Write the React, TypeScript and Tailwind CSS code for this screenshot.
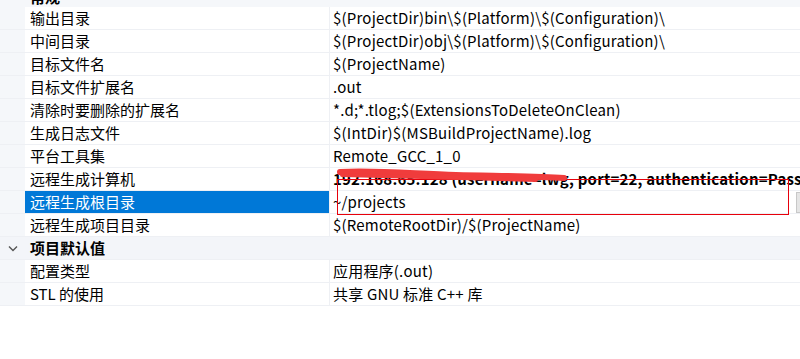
import React from 'react'

type Row = { label: string; value: string; bold?: boolean; selected?: boolean }

const general: Row[] = [
  { label: '输出目录', value: '$(ProjectDir)bin\\$(Platform)\\$(Configuration)\\' },
  { label: '中间目录', value: '$(ProjectDir)obj\\$(Platform)\\$(Configuration)\\' },
  { label: '目标文件名', value: '$(ProjectName)' },
  { label: '目标文件扩展名', value: '.out' },
  { label: '清除时要删除的扩展名', value: '*.d;*.tlog;$(ExtensionsToDeleteOnClean)' },
  { label: '生成日志文件', value: '$(IntDir)$(MSBuildProjectName).log' },
  { label: '平台工具集', value: 'Remote_GCC_1_0' },
  {
    label: '远程生成计算机',
    value: '192.168.65.128 (username=lwg, port=22, authentication=Password)',
    bold: true,
  },
  { label: '远程生成根目录', value: '~/projects', selected: true },
  { label: '远程生成项目目录', value: '$(RemoteRootDir)/$(ProjectName)' },
]

const defaults: Row[] = [
  { label: '配置类型', value: '应用程序(.out)' },
  { label: 'STL 的使用', value: '共享 GNU 标准 C++ 库' },
]

function PropRow({ row }: { row: Row }) {
  return (
    <div className="flex h-[23px] border-b border-[#eef0f4] bg-[#f5f7fa]">
      <div className="w-[25px] shrink-0" />
      <div
        className={
          row.selected
            ? 'flex w-[304px] shrink-0 items-center bg-[#0078d7] pl-[5px] text-white'
            : 'flex w-[304px] shrink-0 items-center bg-white pl-[5px] text-black'
        }
      >
        {row.label}
      </div>
      <div className="flex min-w-0 flex-1 items-center overflow-hidden whitespace-nowrap border-l border-[#eef0f4] bg-white pl-[3px] tracking-[0.2px]">
        <span className={row.bold ? 'font-bold' : ''}>{row.value}</span>
        {row.selected && (
          <div className="ml-auto h-[21px] w-[4px] shrink-0 self-end border border-r-0 border-[#c8c8c8] bg-[#e5e5e5]" />
        )}
      </div>
    </div>
  )
}

export default function App() {
  return (
    <div
      className="relative h-[359px] w-[800px] overflow-hidden bg-white text-[15px] text-black"
      style={{ fontFamily: '"Noto Sans CJK SC", "Noto Sans", sans-serif' }}
    >
      <div className="flex h-[7px] items-end overflow-hidden bg-[#f5f7fa]">
        <div className="-mb-[1px] h-[23px] pl-[30px] font-bold leading-[23px]">常规</div>
      </div>

      {general.map((r) => (
        <PropRow key={r.label} row={r} />
      ))}

      <div className="flex h-[23px] items-center border-b border-[#eef0f4] bg-[#f3f5f9]">
        <div className="flex w-[25px] shrink-0 items-center justify-center">
          <svg width="10" height="7" viewBox="0 0 10 7" fill="none">
            <path d="M1 1.5 L5 5.5 L9 1.5" stroke="#555" strokeWidth="1.4" />
          </svg>
        </div>
        <div className="pl-[5px] font-bold">项目默认值</div>
      </div>

      {defaults.map((r) => (
        <PropRow key={r.label} row={r} />
      ))}

      {/* red annotation box */}
      <div className="pointer-events-none absolute left-[337px] top-[179px] z-10 h-[36px] w-[452px] border-[1.5px] border-solid border-red-600" />

      {/* red scribble over the host address */}
      <svg className="absolute left-[336px] top-[166px] z-10" width="240" height="20" viewBox="0 0 240 20">
        <path
          d="M4 6 C40 4 80 8 120 9 C160 10 200 10 228 12"
          stroke="#f03c3c"
          strokeWidth="6"
          strokeLinecap="round"
          fill="none"
        />
        <path
          d="M6 9 C60 10 120 12 200 14"
          stroke="#f03c3c"
          strokeWidth="4"
          strokeLinecap="round"
          fill="none"
        />
      </svg>
    </div>
  )
}
